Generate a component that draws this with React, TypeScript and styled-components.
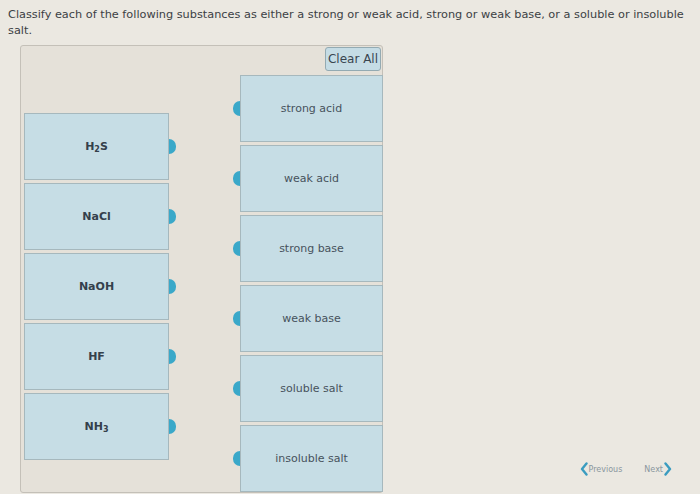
import React from "react";
import styled, { createGlobalStyle } from "styled-components";

const Global = createGlobalStyle`
  html, body { margin: 0; padding: 0; background: #ebe8e1; }
  body { font-family: "DejaVu Sans", Verdana, sans-serif; width: 700px; height: 494px; overflow: hidden; }
`;

const Page = styled.div`
  width: 700px;
  height: 494px;
  display: flex;
  flex-direction: column;
  background: #ebe8e1;
`;

const Prompt = styled.p`
  margin: 0;
  padding: 7px 8px 0 8px;
  font-size: 11.3px;
  line-height: 16px;
  color: #3b3f44;
  height: 45px;
  box-sizing: border-box;
`;

const Body = styled.div`
  flex: 1;
  display: flex;
  padding-left: 20px;
`;

const Panel = styled.div`
  width: 363px;
  height: 448px;
  box-sizing: border-box;
  background: #e5e1d9;
  border: 1px solid #c4c0b8;
  border-radius: 3px;
  display: flex;
  flex-direction: column;
`;

const Toolbar = styled.div`
  display: flex;
  justify-content: flex-end;
  padding: 1px 1px 0 0;
  height: 30px;
  box-sizing: border-box;
`;

const ClearButton = styled.button`
  font-family: "DejaVu Sans", Verdana, sans-serif;
  font-size: 12px;
  color: #394550;
  background: #c5dce5;
  border: 1px solid #93aab2;
  border-radius: 3px;
  height: 24px;
  width: 56px;
  padding: 0;
`;

const Board = styled.div`
  display: flex;
  justify-content: space-between;
  padding-left: 3px;
`;

const Column = styled.div<{ $offset: number }>`
  display: flex;
  flex-direction: column;
  gap: 3px;
  margin-top: ${(p) => p.$offset}px;
`;

const Tile = styled.div<{ $w: number; $side: "left" | "right" }>`
  position: relative;
  width: ${(p) => p.$w}px;
  height: 67px;
  box-sizing: border-box;
  background: #c6dde5;
  border: 1px solid #a6b8bd;
  display: flex;
  align-items: center;
  justify-content: center;
  margin-right: ${(p) => (p.$side === "left" ? 0 : -1)}px;
`;

const Tab = styled.span<{ $side: "left" | "right" }>`
  position: absolute;
  top: 50%;
  width: 7px;
  height: 15px;
  margin-top: -8px;
  background: #3aa8c9;
  ${(p) =>
    p.$side === "right"
      ? "right: -8px; border-radius: 0 8px 8px 0;"
      : "left: -8px; border-radius: 8px 0 0 8px;"}
`;

const Formula = styled.span`
  font-size: 11px;
  font-weight: bold;
  color: #34404b;
  sub { font-size: 8px; vertical-align: -2px; line-height: 0; }
`;

const Category = styled.span`
  font-size: 11px;
  color: #46525c;
`;

const Aside = styled.div`
  flex: 1;
  display: flex;
  align-items: flex-end;
  justify-content: flex-end;
  padding: 0 28px 18px 0;
`;

const Nav = styled.div`
  display: flex;
  align-items: center;
  gap: 22px;
`;

const NavLink = styled.span`
  display: flex;
  align-items: center;
  gap: 1px;
  font-size: 8px;
  color: #8a969e;
`;

const Chevron = styled.svg`
  width: 8px;
  height: 14px;
`;

const substances = [
  <>H<sub>2</sub>S</>,
  <>NaCl</>,
  <>NaOH</>,
  <>HF</>,
  <>NH<sub>3</sub></>,
];

const categories = [
  "strong acid",
  "weak acid",
  "strong base",
  "weak base",
  "soluble salt",
  "insoluble salt",
];

export default function App() {
  return (
    <Page>
      <Global />
      <Prompt>
        Classify each of the following substances as either a strong or weak acid, strong or weak base, or a soluble or insoluble salt.
      </Prompt>
      <Body>
        <Panel>
          <Toolbar>
            <ClearButton>Clear All</ClearButton>
          </Toolbar>
          <Board>
            <Column $offset={38}>
              {substances.map((s, i) => (
                <Tile key={i} $w={145} $side="left">
                  <Formula>{s}</Formula>
                  <Tab $side="right" />
                </Tile>
              ))}
            </Column>
            <Column $offset={0}>
              {categories.map((c) => (
                <Tile key={c} $w={143} $side="right">
                  <Category>{c}</Category>
                  <Tab $side="left" />
                </Tile>
              ))}
            </Column>
          </Board>
        </Panel>
        <Aside>
          <Nav>
            <NavLink>
              <Chevron viewBox="0 0 8 14">
                <path d="M6.5 1.5 L2 7 L6.5 12.5" fill="none" stroke="#3a9cc0" strokeWidth="2.4" strokeLinecap="round" strokeLinejoin="round" />
              </Chevron>
              Previous
            </NavLink>
            <NavLink>
              Next
              <Chevron viewBox="0 0 8 14">
                <path d="M1.5 1.5 L6 7 L1.5 12.5" fill="none" stroke="#3a9cc0" strokeWidth="2.4" strokeLinecap="round" strokeLinejoin="round" />
              </Chevron>
            </NavLink>
          </Nav>
        </Aside>
      </Body>
    </Page>
  );
}
